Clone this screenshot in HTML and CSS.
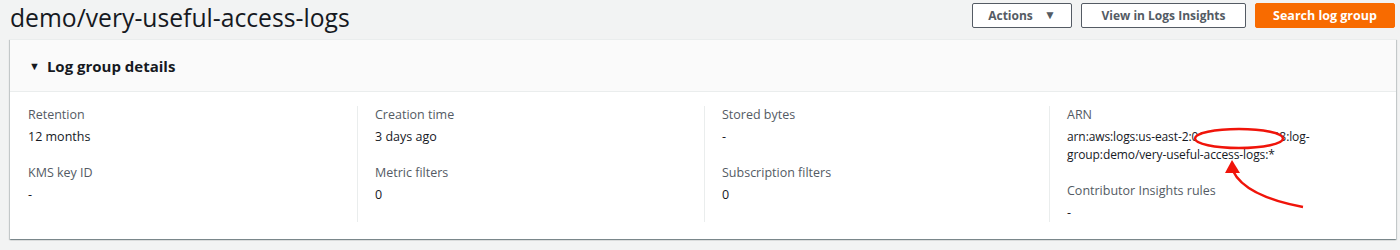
FILE: index.html
```html
<!DOCTYPE html>
<html>
<head>
<meta charset="utf-8">
<link rel="stylesheet" href="styles.css">
</head>
<body>
<div class="page">
  <div class="topbar">
    <h1 class="title">demo/very-useful-access-logs</h1>
    <div class="actions">
      <button class="btn">Actions <span class="caret">▼</span></button>
      <button class="btn">View in Logs Insights</button>
      <button class="btn primary">Search log group</button>
    </div>
  </div>
  <section class="panel">
    <header class="panel-head">
      <span class="tri">▼</span>
      <h2 class="panel-title">Log group details</h2>
    </header>
    <div class="panel-body">
      <div class="col">
        <div class="item"><div class="label">Retention</div><div class="value">12 months</div></div>
        <div class="item"><div class="label">KMS key ID</div><div class="value">-</div></div>
      </div>
      <div class="col">
        <div class="item"><div class="label">Creation time</div><div class="value">3 days ago</div></div>
        <div class="item"><div class="label">Metric filters</div><div class="value">0</div></div>
      </div>
      <div class="col">
        <div class="item"><div class="label">Stored bytes</div><div class="value">-</div></div>
        <div class="item"><div class="label">Subscription filters</div><div class="value">0</div></div>
      </div>
      <div class="col">
        <div class="item"><div class="label">ARN</div><div class="value arn">arn:aws:logs:us-east-2:01234567890128:log-group:demo/very-useful-access-logs:*</div></div>
        <div class="item"><div class="label">Contributor Insights rules</div><div class="value">-</div></div>
      </div>
    </div>
  </section>
</div>
<svg class="annot" width="1400" height="250" viewBox="0 0 1400 250">
  <ellipse cx="1239" cy="138.5" rx="44" ry="9.5" fill="#fff" stroke="#f0140a" stroke-width="2.5"/>
  <path d="M1303 207 Q1245 196 1233 171" fill="none" stroke="#f0140a" stroke-width="2.5"/>
  <polygon points="1232,160 1225,173 1240,173" fill="#f0140a"/>
</svg>
</body>
</html>
```

FILE: styles.css
```css
* { box-sizing: border-box; }
html, body { margin: 0; padding: 0; }
body {
  background: #f2f3f3;
  font-family: "Open Sans", "Noto Sans", Arial, sans-serif;
  color: #16191f;
  width: 1400px;
  height: 250px;
  overflow: hidden;
  position: relative;
}
.page { padding: 0 4px 0 10px; }
.topbar {
  display: flex;
  justify-content: space-between;
  align-items: flex-start;
  height: 39px;
}
.title {
  margin: 0;
  font-size: 24.7px;
  font-weight: 400;
  line-height: 32px;
  margin-top: 2px;
  color: #16191f;
}
.actions { display: flex; gap: 9px; padding-top: 3px; padding-right: 1px; }
.btn {
  height: 25px;
  border: 1px solid #545b64;
  border-radius: 2px;
  background: #fff;
  color: #545b64;
  font-family: inherit;
  font-weight: 700;
  font-size: 12px;
  padding: 0 8px;
  line-height: 23px;
  white-space: nowrap;
}
.btn:first-child { width: 100px; }
.btn:nth-child(2) { width: 165px; }
.btn.primary { width: 140px; background: #f86b00; border-color: #f86b00; color: #fff; font-size: 12.5px; }
.caret { font-size: 12px; margin-left: 8px; position: relative; top: -1px; }
.panel {
  background: #fff;
  box-shadow: 0 1px 1px 0 rgba(0,28,36,.3), 1px 1px 1px 0 rgba(0,28,36,.15), -1px 1px 1px 0 rgba(0,28,36,.15);
  border-top: 1px solid #eaeded;
}
.panel-head {
  display: flex;
  align-items: center;
  height: 52px;
  background: #fafafa;
  border-bottom: 1px solid #eaeded;
  padding-left: 19px;
}
.tri { font-size: 11px; margin-right: 7px; color: #16191f; }
.panel-title { margin: 0; font-size: 15px; font-weight: 700; }
.panel-body {
  display: grid;
  grid-template-columns: 329px 347px 345px 1fr;
  padding: 14px 18px 17px 18px;
}
.col { display: flex; flex-direction: column; gap: 18px; }
.col + .col { border-left: 1px solid #eaeded; padding-left: 17px; }
.label { font-size: 12.5px; line-height: 18px; color: #545b64; }
.value { font-size: 12.5px; line-height: 18px; margin-top: 4px; color: #16191f; padding-right: 40px; }
.value.arn { font-size: 12px; letter-spacing: -0.1px; }
.annot { position: absolute; top: 0; left: 0; pointer-events: none; }
```
